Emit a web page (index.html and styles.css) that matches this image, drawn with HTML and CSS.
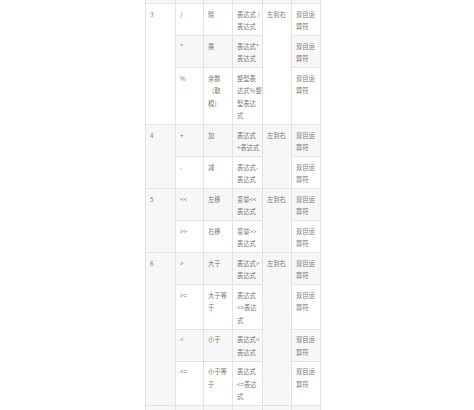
FILE: index.html
```html
<!DOCTYPE html>
<html lang="zh">
<head>
<meta charset="utf-8">
<title>运算符优先级</title>
<link rel="stylesheet" href="styles.css">
</head>
<body>
<div class="page">
  <table class="ops">
    <colgroup>
      <col class="c-level"><col class="c-op"><col class="c-name"><col class="c-form"><col class="c-dir"><col class="c-note">
    </colgroup>
    <tbody>
      <tr class="tail"><td></td><td></td><td></td><td></td><td></td><td></td></tr>
      <tr>
        <td rowspan="3">3</td><td>/</td><td>除</td><td>表达式 /<br>表达式</td><td rowspan="3">左到右</td><td>双目运<br>算符</td>
      </tr>
      <tr>
        <td>*</td><td>乘</td><td>表达式*<br>表达式</td><td>双目运<br>算符</td>
      </tr>
      <tr>
        <td>%</td><td>余数<br>（取<br>模）</td><td>整型表<br>达式%整<br>型表达<br>式</td><td>双目运<br>算符</td>
      </tr>
      <tr>
        <td rowspan="2">4</td><td>+</td><td>加</td><td>表达式<br>+表达式</td><td rowspan="2">左到右</td><td>双目运<br>算符</td>
      </tr>
      <tr>
        <td>-</td><td>减</td><td>表达式-<br>表达式</td><td>双目运<br>算符</td>
      </tr>
      <tr>
        <td rowspan="2">5</td><td>&lt;&lt;</td><td>左移</td><td>变量&lt;&lt;<br>表达式</td><td rowspan="2">左到右</td><td>双目运<br>算符</td>
      </tr>
      <tr>
        <td>&gt;&gt;</td><td>右移</td><td>变量&gt;&gt;<br>表达式</td><td>双目运<br>算符</td>
      </tr>
      <tr>
        <td rowspan="4">6</td><td>&gt;</td><td>大于</td><td>表达式&gt;<br>表达式</td><td rowspan="4">左到右</td><td>双目运<br>算符</td>
      </tr>
      <tr>
        <td>&gt;=</td><td>大于等<br>于</td><td>表达式<br>&gt;=表达<br>式</td><td>双目运<br>算符</td>
      </tr>
      <tr>
        <td>&lt;</td><td>小于</td><td>表达式&lt;<br>表达式</td><td>双目运<br>算符</td>
      </tr>
      <tr>
        <td>&lt;=</td><td>小于等<br>于</td><td>表达式<br>&lt;=表达<br>式</td><td>双目运<br>算符</td>
      </tr>
      <tr class="tail tail-end"><td></td><td></td><td></td><td></td><td></td><td></td></tr>
    </tbody>
  </table>
</div>
</body>
</html>
```

FILE: styles.css
```css
html, body {
  margin: 0;
  padding: 0;
  background: #ffffff;
}

.page {
  height: 410px;
  overflow: hidden;
  padding-left: 145px;
}

.ops {
  border-collapse: collapse;
  table-layout: fixed;
  width: 176px;
  font-family: "Noto Sans CJK SC", "Liberation Sans", sans-serif;
  font-size: 6.3px;
  line-height: 12.5px;
  color: #777777;
}

.c-level { width: 30px; }
.c-op { width: 28px; }
.c-name { width: 29px; }
.c-form { width: 30px; }
.c-dir { width: 29px; }
.c-note { width: 29px; }

.ops td {
  border: 1px solid #e3e3e3;
  padding: 4.5px 3px 1.5px 4px;
  vertical-align: top;
  white-space: nowrap;
  overflow: hidden;
}

.ops tr:nth-child(odd) td {
  background: #f7f7f7;
}

.ops tr.tail td {
  border-top: 0;
  height: 3px;
  padding: 0;
}

.ops tr.tail-end td {
  border-top: 1px solid #e3e3e3;
  border-bottom: 0;
  height: 8px;
}
```
